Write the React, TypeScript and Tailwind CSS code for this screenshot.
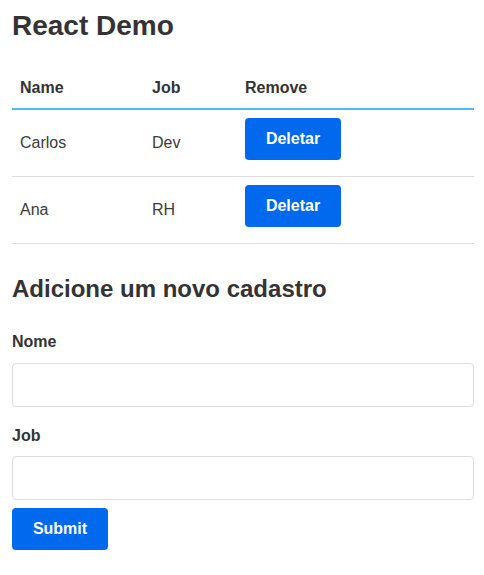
import { useState } from "react";

type Person = { name: string; job: string };

const INITIAL: Person[] = [
  { name: "Carlos", job: "Dev" },
  { name: "Ana", job: "RH" },
];

const btn =
  "h-[42px] w-[96px] rounded-[4px] bg-[#0069ed] text-[16px] font-bold leading-[24px] text-white";

export default function App() {
  const [people, setPeople] = useState<Person[]>(INITIAL);
  const [name, setName] = useState("");
  const [job, setJob] = useState("");

  const remove = (i: number) => setPeople((p) => p.filter((_, idx) => idx !== i));

  const submit = () => {
    if (!name && !job) return;
    setPeople((p) => [...p, { name, job }]);
    setName("");
    setJob("");
  };

  return (
    <div className="w-[484px] px-[12px] pt-[9px] font-['Liberation_Sans',Arial,sans-serif] text-[#333]">
      <h1 className="text-[28px] font-bold leading-[34px]">React Demo</h1>

      <table className="mt-[25px] w-[462px] table-fixed border-collapse text-[16px] leading-[24px]">
        <colgroup>
          <col className="w-[132px]" />
          <col className="w-[93px]" />
          <col />
        </colgroup>
        <thead>
          <tr className="border-b-2 border-[#4cbdf2]">
            <th className="px-[8px] py-[8px] text-left font-bold">Name</th>
            <th className="px-[8px] py-[8px] text-left font-bold">Job</th>
            <th className="px-[8px] py-[8px] text-left font-bold">Remove</th>
          </tr>
        </thead>
        <tbody>
          {people.map((p, i) => (
            <tr key={i} className="border-b border-[#dddddd] text-[#3b3b3b]">
              <td className="px-[8px] align-middle">{p.name}</td>
              <td className="px-[8px] align-middle">{p.job}</td>
              <td className="px-[8px] pt-[8px] pb-[16px] align-top">
                <button className={btn} onClick={() => remove(i)}>
                  Deletar
                </button>
              </td>
            </tr>
          ))}
        </tbody>
      </table>

      <h2 className="mt-[30px] text-[24px] font-bold leading-[30px]">Adicione um novo cadastro</h2>

      <div className="mt-[26px] flex flex-col">
        <label className="text-[16px] font-bold leading-[24px]" htmlFor="nome">
          Nome
        </label>
        <input
          id="nome"
          value={name}
          onChange={(e) => setName(e.target.value)}
          className="mt-[9px] h-[44px] w-[462px] rounded-[4px] border border-[#dddddd] px-[10px] text-[16px] outline-none"
        />
        <label className="mt-[17px] text-[16px] font-bold leading-[24px]" htmlFor="job">
          Job
        </label>
        <input
          id="job"
          value={job}
          onChange={(e) => setJob(e.target.value)}
          className="mt-[8px] h-[44px] w-[462px] rounded-[4px] border border-[#dddddd] px-[10px] text-[16px] outline-none"
        />
        <button className={`${btn} mt-[8px]`} onClick={submit}>
          Submit
        </button>
      </div>
    </div>
  );
}
